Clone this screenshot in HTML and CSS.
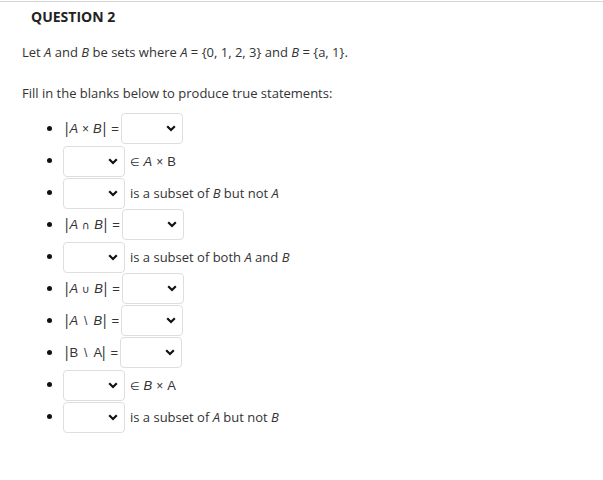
FILE: index.html
```html
<!DOCTYPE html>
<html>
<head>
<meta charset="utf-8">
<link rel="stylesheet" href="styles.css">
</head>
<body>
<div class="page">
  <h2 class="title">QUESTION 2</h2>
  <p class="intro">Let <i>A</i> and <i>B</i> be sets where <i>A</i> = {0, 1, 2, 3} and <i>B</i> = {a, 1}.</p>
  <p class="fill">Fill in the blanks below to produce true statements:</p>
  <ul class="items">
    <li><div class="row"><span class="math"><span class="bar">|</span><i>A</i><span class="op">×</span><i>B</i><span class="bar">|</span><span class="rel">=</span></span><span class="sel"><svg width="10" height="7" viewBox="0 0 10 7"><path d="M1.2 1.3 L5 5 L8.8 1.3" fill="none" stroke="#111" stroke-width="2.2"/></svg></span></div></li>
    <li><div class="row"><span class="sel"><svg width="10" height="7" viewBox="0 0 10 7"><path d="M1.2 1.3 L5 5 L8.8 1.3" fill="none" stroke="#111" stroke-width="2.2"/></svg></span><span class="after math"><span class="in">∈</span><i>A</i><span class="op">×</span>B</span></div></li>
    <li><div class="row"><span class="sel"><svg width="10" height="7" viewBox="0 0 10 7"><path d="M1.2 1.3 L5 5 L8.8 1.3" fill="none" stroke="#111" stroke-width="2.2"/></svg></span><span class="after">is a subset of <i>B</i> but not <i>A</i></span></div></li>
    <li><div class="row"><span class="math"><span class="bar">|</span><i>A</i><span class="op set">∩</span><i>B</i><span class="bar">|</span><span class="rel">=</span></span><span class="sel"><svg width="10" height="7" viewBox="0 0 10 7"><path d="M1.2 1.3 L5 5 L8.8 1.3" fill="none" stroke="#111" stroke-width="2.2"/></svg></span></div></li>
    <li><div class="row"><span class="sel"><svg width="10" height="7" viewBox="0 0 10 7"><path d="M1.2 1.3 L5 5 L8.8 1.3" fill="none" stroke="#111" stroke-width="2.2"/></svg></span><span class="after">is a subset of both <i>A</i> and <i>B</i></span></div></li>
    <li><div class="row"><span class="math"><span class="bar">|</span><i>A</i><span class="op set">∪</span><i>B</i><span class="bar">|</span><span class="rel">=</span></span><span class="sel"><svg width="10" height="7" viewBox="0 0 10 7"><path d="M1.2 1.3 L5 5 L8.8 1.3" fill="none" stroke="#111" stroke-width="2.2"/></svg></span></div></li>
    <li><div class="row"><span class="math"><span class="bar">|</span><i>A</i><span class="op bs">\</span><i>B</i><span class="bar">|</span><span class="rel">=</span></span><span class="sel"><svg width="10" height="7" viewBox="0 0 10 7"><path d="M1.2 1.3 L5 5 L8.8 1.3" fill="none" stroke="#111" stroke-width="2.2"/></svg></span></div></li>
    <li><div class="row"><span class="math"><span class="bar">|</span>B<span class="op bs">\</span>A<span class="bar">|</span><span class="rel">=</span></span><span class="sel"><svg width="10" height="7" viewBox="0 0 10 7"><path d="M1.2 1.3 L5 5 L8.8 1.3" fill="none" stroke="#111" stroke-width="2.2"/></svg></span></div></li>
    <li><div class="row"><span class="sel"><svg width="10" height="7" viewBox="0 0 10 7"><path d="M1.2 1.3 L5 5 L8.8 1.3" fill="none" stroke="#111" stroke-width="2.2"/></svg></span><span class="after math"><span class="in">∈</span><i>B</i><span class="op">×</span>A</span></div></li>
    <li><div class="row"><span class="sel"><svg width="10" height="7" viewBox="0 0 10 7"><path d="M1.2 1.3 L5 5 L8.8 1.3" fill="none" stroke="#111" stroke-width="2.2"/></svg></span><span class="after">is a subset of <i>A</i> but not <i>B</i></span></div></li>
  </ul>
</div>
</body>
</html>
```
FILE: styles.css
```css
html, body {
  margin: 0;
  padding: 0;
  background: #fff;
}
body {
  font-family: "Open Sans", "Noto Sans", sans-serif;
  font-size: 13px;
  color: #333;
}
.page {
  margin-top: 1px;
  border-top: 1px solid #d4d4d4;
}
.title {
  margin: 5px 0 0 31px;
  font-size: 14px;
  line-height: 19px;
  font-weight: 700;
  color: #222;
}
.intro {
  margin: 17px 0 0 22px;
  line-height: 18px;
}
.fill {
  margin: 23px 0 0 22px;
  line-height: 18px;
}
.items {
  margin: 11px 0 0 0;
  padding-left: 63px;
  list-style: disc outside;
}
.items li {
  height: 32px;
  line-height: 31px;
  color: #111;
}
.row {
  display: flex;
  align-items: flex-start;
  height: 32px;
  color: #333;
}
.math {
  font-family: "Liberation Sans", Arial, sans-serif;
  font-size: 13px;
  line-height: 31px;
  padding-left: 2px;
  margin-right: 2px;
  color: #333;
  white-space: nowrap;
}
.math i {
  font-style: italic;
}
.bar {
  display: inline-block;
  transform: scaleY(1.25);
  margin: 0 1px 0 0;
}
.math i + .bar {
  margin-left: 1px;
}
.op {
  display: inline-block;
  margin: 0 4px;
  font-size: 12px;
}
.op.set {
  font-family: "DejaVu Sans", sans-serif;
  font-size: 11px;
}
.op.bs {
  margin: 0 6px;
}
.in {
  display: inline-block;
  font-family: "DejaVu Sans", sans-serif;
  font-size: 11px;
  margin-right: 4px;
}
.rel {
  display: inline-block;
  margin-left: 4px;
}
.sel {
  box-sizing: border-box;
  flex: none;
  width: 62px;
  height: 31px;
  border: 1px solid #dedede;
  border-radius: 4px;
  background: #fff;
  display: flex;
  align-items: center;
  justify-content: flex-end;
  padding-right: 6px;
}
.after {
  margin-left: 5px;
  line-height: 31px;
  padding-left: 0;
}
.after.math {
  font-size: 13px;
  padding-left: 0;
}
```
